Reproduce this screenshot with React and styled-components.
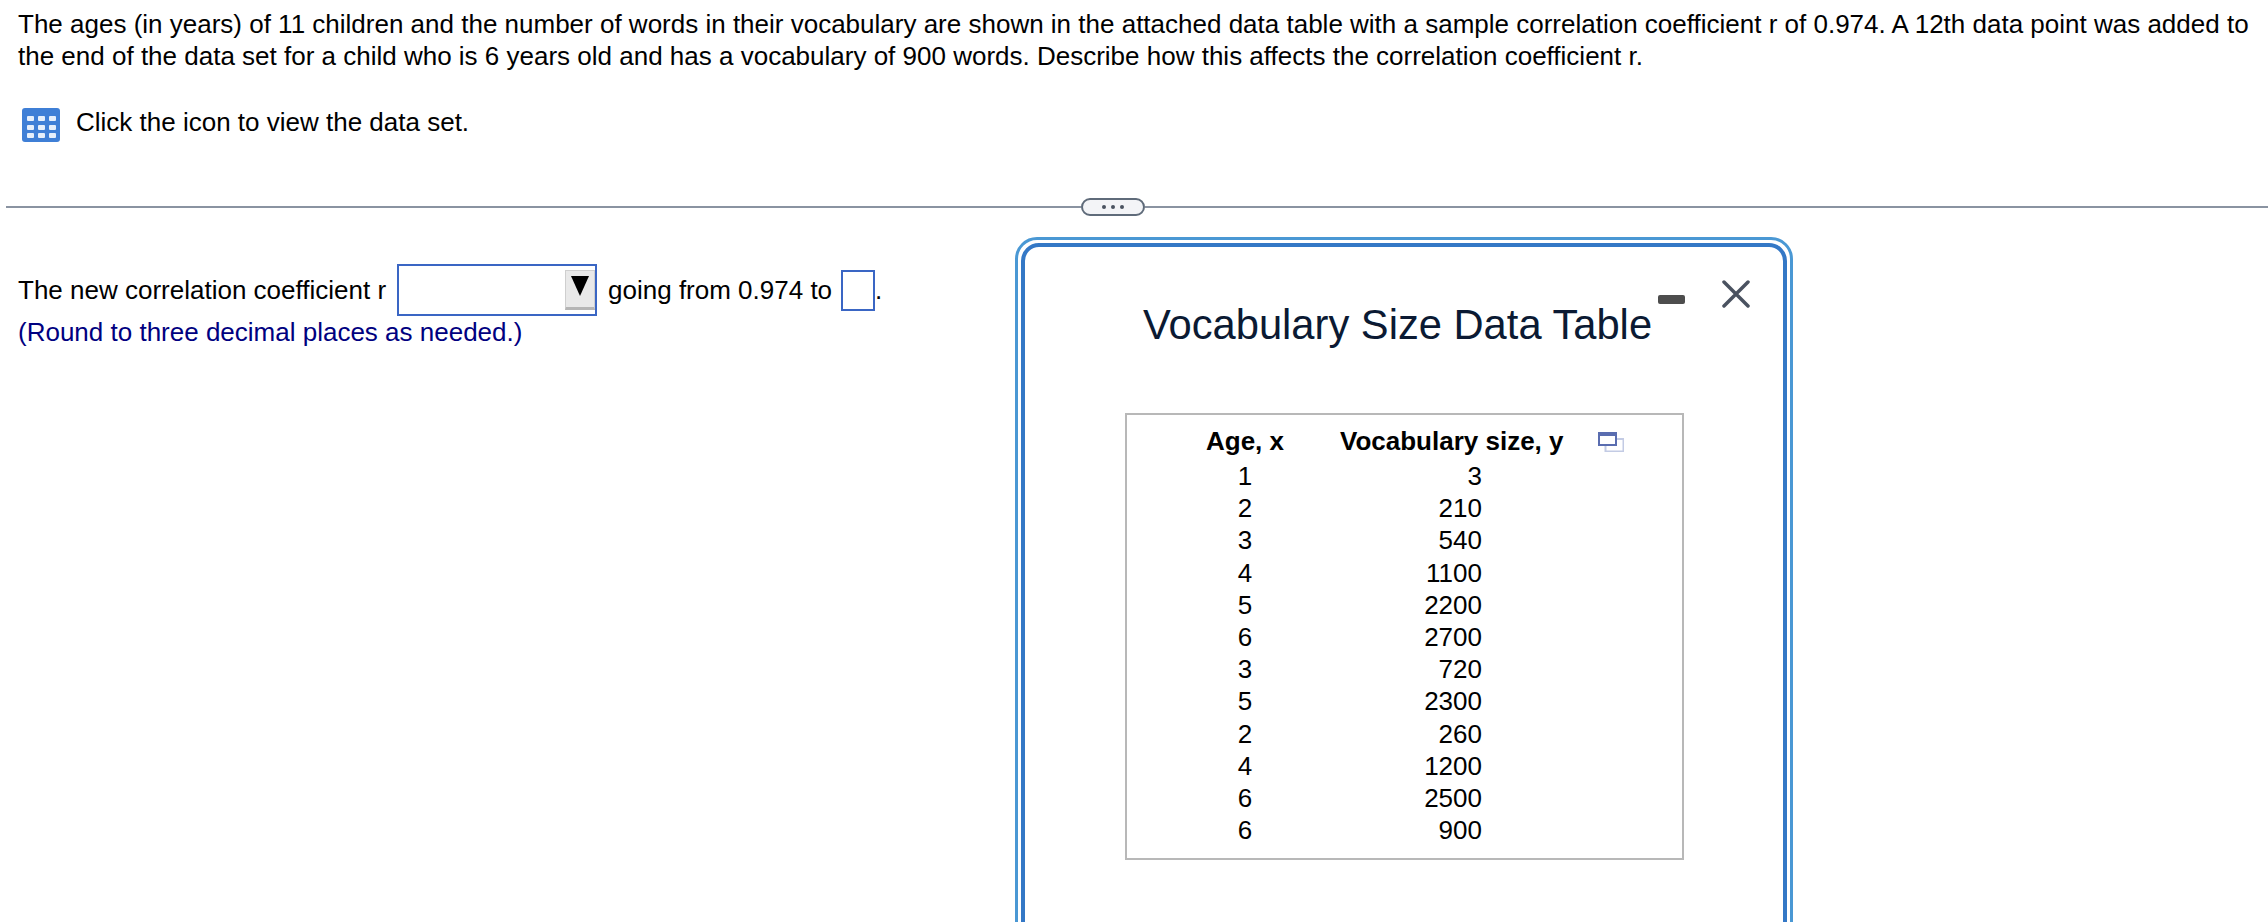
import React from "react";
import styled, { createGlobalStyle } from "styled-components";

const rows = [
  [1, 3],
  [2, 210],
  [3, 540],
  [4, 1100],
  [5, 2200],
  [6, 2700],
  [3, 720],
  [5, 2300],
  [2, 260],
  [4, 1200],
  [6, 2500],
  [6, 900],
];

const GlobalStyle = createGlobalStyle`
  html, body {
    margin: 0;
    padding: 0;
    background: #fff;
    overflow: hidden;
  }
`;

const Page = styled.div`
  width: 2268px;
  height: 922px;
  overflow: hidden;
  font-family: "Liberation Sans", Arial, sans-serif;
  font-size: 26px;
  color: #000;
`;

const Question = styled.p`
  margin: 0;
  padding: 8px 10px 0 18px;
  line-height: 32px;
`;

const DataLink = styled.div`
  display: flex;
  align-items: flex-start;
  gap: 16px;
  height: 34px;
  margin-top: 36px;
  padding-left: 22px;
  line-height: 28px;
`;

const Divider = styled.div`
  display: flex;
  align-items: center;
  margin-top: 56px;
  padding-left: 6px;
`;

const Line = styled.div`
  height: 2px;
  background: #8a93a1;
  flex: ${(p) => (p.$grow ? "1" : "0 0 1075px")};
`;

const MoreButton = styled.div`
  display: flex;
  align-items: center;
  justify-content: center;
  gap: 5px;
  box-sizing: border-box;
  width: 64px;
  height: 18px;
  border: 2px solid #5f6b7a;
  border-radius: 9px;
  background: #f3f4f7;
`;

const Dot = styled.span`
  width: 4px;
  height: 4px;
  border-radius: 50%;
  background: #4a5260;
`;

const Split = styled.div`
  display: flex;
  margin-top: 21px;
`;

const Answer = styled.div`
  flex: 0 0 1015px;
  box-sizing: border-box;
  padding: 27px 0 0 18px;
`;

const AnswerRow = styled.div`
  display: flex;
  align-items: center;
  height: 52px;
`;

const Select = styled.div`
  display: flex;
  justify-content: flex-end;
  align-items: center;
  box-sizing: border-box;
  width: 200px;
  height: 52px;
  margin: 0 11px 0 11px;
  border: 2px solid #3a66c4;
`;

const SelectArrow = styled.div`
  display: flex;
  justify-content: center;
  box-sizing: border-box;
  width: 30px;
  height: 40px;
  padding-top: 5px;
  background: #e9e9e9;
  border: 1px solid #cfcfcf;
  border-bottom: 3px solid #b5b5b5;
`;

const Triangle = styled.span`
  width: 0;
  height: 0;
  border-left: 9px solid transparent;
  border-right: 9px solid transparent;
  border-top: 20px solid #000;
`;

const NumberInput = styled.div`
  box-sizing: border-box;
  width: 34px;
  height: 41px;
  margin-left: 9px;
  border: 2px solid #3a66c4;
`;

const Hint = styled.div`
  line-height: 32px;
  color: #000080;
`;

const Modal = styled.div`
  flex: 0 0 778px;
  box-sizing: border-box;
  height: 760px;
  padding: 3px;
  border: 3px solid #4a98d4;
  border-radius: 22px;
`;

const ModalInner = styled.div`
  box-sizing: border-box;
  height: 100%;
  border: 4px solid #3478c6;
  border-radius: 18px;
`;

const ModalHeader = styled.div`
  display: flex;
  align-items: flex-start;
  height: 166px;
  padding-left: 118px;
`;

const Title = styled.h2`
  margin: 51px 0 0;
  font-size: 41.7px;
  font-weight: 400;
  line-height: 54px;
  color: #0b1a33;
`;

const Minimize = styled.div`
  width: 27px;
  height: 9px;
  margin: 48px 37px 0 6px;
  border-radius: 2px;
  background: #4d4d4d;
`;

const Close = styled.svg`
  width: 28px;
  height: 28px;
  margin-top: 33px;
`;

const TableBox = styled.div`
  box-sizing: border-box;
  width: 559px;
  height: 447px;
  margin-left: 100px;
  padding: 10px 0 0 79px;
  border: 2px solid #b8b8b8;
`;

const DataRow = styled.div`
  display: grid;
  grid-template-columns: 134px 258px 26px;
  height: ${(p) => (p.$head ? "35px" : "32.2px")};
  line-height: 32px;
  white-space: nowrap;
  font-weight: ${(p) => (p.$head ? 700 : 400)};
`;

const AgeCell = styled.div`
  width: 78px;
  text-align: center;
`;

const SizeCell = styled.div`
  padding-right: ${(p) => (p.$head ? "35px" : "116px")};
  text-align: right;
`;

const CopyIcon = styled.svg`
  width: 26px;
  height: 20px;
  margin-top: 7px;
`;

function TableIcon() {
  const cols = [5, 16, 27];
  const lines = [8, 17, 25];
  return (
    <svg width="38" height="34" viewBox="0 0 38 34">
      <rect width="38" height="34" rx="3" fill="#3f7fd6" />
      {lines.map((y) =>
        cols.map((x) => (
          <rect key={`${x}-${y}`} x={x} y={y} width="7" height="5" rx="1" fill="#e6effb" />
        ))
      )}
    </svg>
  );
}

export default function App() {
  return (
    <Page>
      <GlobalStyle />
      <Question>
        The ages (in years) of 11 children and the number of words in their vocabulary are shown in the
        attached data table with a sample correlation coefficient r of 0.974. A 12th data point was added to
        the end of the data set for a child who is 6 years old and has a vocabulary of 900 words. Describe how
        this affects the correlation coefficient r.
      </Question>
      <DataLink>
        <TableIcon />
        <span>Click the icon to view the data set.</span>
      </DataLink>
      <Divider>
        <Line />
        <MoreButton>
          <Dot />
          <Dot />
          <Dot />
        </MoreButton>
        <Line $grow />
      </Divider>
      <Split>
        <Answer>
          <AnswerRow>
            <span>The new correlation coefficient r</span>
            <Select>
              <SelectArrow>
                <Triangle />
              </SelectArrow>
            </Select>
            <span>going from 0.974 to</span>
            <NumberInput />
            <span>.</span>
          </AnswerRow>
          <Hint>(Round to three decimal places as needed.)</Hint>
        </Answer>
        <Modal>
          <ModalInner>
            <ModalHeader>
              <Title>Vocabulary Size Data Table</Title>
              <Minimize />
              <Close viewBox="0 0 28 28">
                <path d="M2 2 L26 26 M26 2 L2 26" stroke="#4a5260" strokeWidth="3.5" strokeLinecap="round" />
              </Close>
            </ModalHeader>
            <TableBox>
              <DataRow $head>
                <AgeCell>Age, x</AgeCell>
                <SizeCell $head>Vocabulary size, y</SizeCell>
                <CopyIcon viewBox="0 0 26 20">
                  <rect x="7.5" y="7" width="18" height="12.5" fill="none" stroke="#c3cbe4" strokeWidth="2" />
                  <rect x="1" y="1" width="17" height="12" fill="#fff" stroke="#5a6db0" strokeWidth="2" />
                  <rect x="1" y="1" width="17" height="3" fill="#5a6db0" />
                </CopyIcon>
              </DataRow>
              {rows.map(([age, size], i) => (
                <DataRow key={i}>
                  <AgeCell>{age}</AgeCell>
                  <SizeCell>{size}</SizeCell>
                </DataRow>
              ))}
            </TableBox>
          </ModalInner>
        </Modal>
      </Split>
    </Page>
  );
}
